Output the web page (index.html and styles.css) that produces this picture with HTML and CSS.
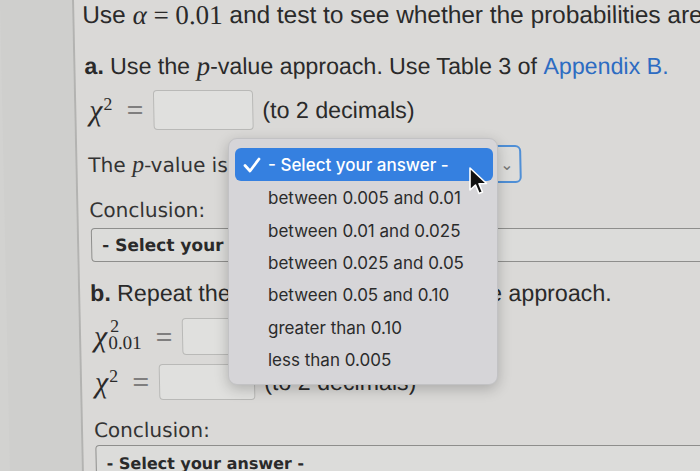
FILE: index.html
```html
<!DOCTYPE html>
<html lang="en">
<head>
  <meta charset="UTF-8">
  <title>Chi-square test</title>
  <link rel="stylesheet" href="styles.css">
</head>
<body>
  <div class="page">
    <div class="gutter"></div>
    <main class="panel">
      <p class="line intro">Use&nbsp;<i class="m">α</i>&nbsp;<span class="mu">=&nbsp;0.01</span>&nbsp;and test to see whether the probabilities are</p>
      <p class="line part-a"><b>a.</b>&nbsp;Use the&nbsp;<i class="m">p</i>-value approach. Use Table 3 of&nbsp;<a class="link">Appendix B.</a></p>
      <div class="line eq eq1">
        <span class="chi">χ<sup>2</sup></span>
        <span class="eqs">=</span>
        <span class="input"></span>
        <span class="note">(to 2 decimals)</span>
      </div>
      <div class="line pval">
        <span class="v">The&nbsp;<i class="m">p</i>-value is</span>
        <span class="select focus"><span class="caret">⌄</span></span>
      </div>
      <div class="line label v concl1">Conclusion:</div>
      <div class="select wide sel1">- Select your answer -</div>
      <p class="line part-b"><b>b.</b>&nbsp;Repeat the&nbsp;<span class="hidden">test using the critical valu</span>e approach.</p>
      <div class="line eq eq01">
        <span class="chi">χ<span class="scripts"><sup>2</sup><sub>0.01</sub></span></span>
        <span class="eqs">=</span>
        <span class="input"></span>
      </div>
      <div class="line eq eq2">
        <span class="chi">χ<sup>2</sup></span>
        <span class="eqs">=</span>
        <span class="input"></span>
        <span class="note">(to 2 decimals)</span>
      </div>
      <div class="line label v concl2">Conclusion:</div>
      <div class="select wide sel2">- Select your answer -</div>
    </main>
  </div>

  <div class="menu">
    <div class="opt active">
      <svg class="check" width="20" height="18" viewBox="0 0 20 18"><path d="M3 9.5 L8 15 L17 3" fill="none" stroke="#fff" stroke-width="2.8" stroke-linecap="round" stroke-linejoin="round"/></svg>
      <span>- Select your answer -</span>
    </div>
    <div class="opt">between 0.005 and 0.01</div>
    <div class="opt">between 0.01 and 0.025</div>
    <div class="opt">between 0.025 and 0.05</div>
    <div class="opt">between 0.05 and 0.10</div>
    <div class="opt">greater than 0.10</div>
    <div class="opt">less than 0.005</div>
  </div>

  <svg class="cursor" width="24" height="32" viewBox="0 0 24 32">
    <path d="M2 2 L2 24 L7.5 19 L11 27.5 L14.5 26 L11 17.8 L18.5 17.5 Z" fill="#111" stroke="#fff" stroke-width="1.6" stroke-linejoin="round"/>
  </svg>
</body>
</html>
```

FILE: styles.css
```css
body {
  margin: 0;
  width: 700px;
  height: 471px;
  overflow: hidden;
  position: relative;
  background: #d2d2d0;
  font-family: "Liberation Sans", Arial, sans-serif;
  color: #2a2a2a;
}

.page {
  display: flex;
  height: 471px;
  transform: skewX(1.2deg);
  transform-origin: 0 0;
}

.gutter {
  flex: none;
  width: 72px;
  background: #cfcfcd;
}

.panel {
  flex: 1;
  min-width: 0;
  border-left: 2px solid #b3b3b1;
  background: #dad9d7;
  padding-left: 8px;
  overflow: hidden;
}

.line {
  display: flex;
  align-items: center;
  margin: 0;
  white-space: nowrap;
  font-size: 23.2px;
}

.intro {
  font-size: 24.4px;
}

.m {
  font-family: "Liberation Serif", "Times New Roman", serif;
  font-style: italic;
  font-size: 27px;
}

.mu {
  font-family: "Liberation Serif", "Times New Roman", serif;
  font-size: 27px;
}

.link {
  color: #2d6cc2;
}

.v {
  font-family: "DejaVu Sans", Verdana, sans-serif;
  font-size: 20px;
  color: #333;
}

.v .m {
  font-size: 24px;
}

.select {
  box-sizing: border-box;
  background: #dcdcda;
  border: 1.5px solid #8e8e8c;
  border-radius: 4px;
  font-family: "DejaVu Sans", Verdana, sans-serif;
  font-weight: bold;
  font-size: 18px;
  color: #2a2a2a;
  display: flex;
  align-items: center;
  padding-left: 10px;
  white-space: nowrap;
}

.intro { height: 30px; }
.part-a { height: 30px; margin-top: 21px; padding-left: 1px; }
.eq1 { height: 40px; margin-top: 9px; }
.pval { height: 38px; margin-top: 15px; padding-left: 3px; }
.concl1 { height: 24px; margin-top: 15px; padding-left: 3px; }
.sel1 { height: 34px; margin-top: 6px; margin-left: 4px; font-size: 17px; }
.part-b { height: 26px; margin-top: 18px; padding-left: 2px; }
.eq01 { height: 37px; margin-top: 12px; }
.eq2 { height: 36px; margin-top: 9px; }
.concl2 { height: 24px; margin-top: 18px; padding-left: 3px; }
.sel2 { height: 36px; margin-top: 3px; margin-left: 4px; font-size: 16px; }

.hidden {
  display: inline-block;
  width: 252px;
  overflow: hidden;
  visibility: hidden;
}

.eq {
  padding-left: 5px;
}

.chi {
  font-family: "Liberation Serif", "Times New Roman", serif;
  font-style: italic;
  font-size: 30px;
  display: inline-flex;
  align-items: flex-start;
  line-height: 1;
}

.chi sup {
  font-style: normal;
  font-size: 18px;
  vertical-align: top;
  margin-left: 1px;
}

.scripts {
  display: inline-flex;
  flex-direction: column;
  font-style: normal;
  line-height: 1;
  margin-left: 1px;
}

.scripts sup {
  font-size: 18px;
  margin: -4px 0 0 2px;
}

.scripts sub {
  font-size: 19px;
  margin-top: -2px;
}

.eqs {
  font-family: "Liberation Serif", "Times New Roman", serif;
  font-size: 30px;
  color: #6a6a6a;
  margin: 0 10px 0 14px;
}

.input {
  display: block;
  width: 100px;
  height: 100%;
  box-sizing: border-box;
  background: #e0e0de;
  border: 1.5px solid #b9b9b7;
  border-radius: 4px;
}

.eq01 .input { width: 110px; }
.eq2 .input { width: 96px; }

.note {
  margin-left: 9px;
}

.select.focus {
  width: 292px;
  height: 38px;
  margin-left: 2px;
  border: 2px solid #4f8fd6;
  border-radius: 6px;
  justify-content: flex-end;
  padding-right: 6px;
}

.caret {
  font-weight: normal;
  color: #777;
  font-size: 16px;
}

.menu {
  position: absolute;
  left: 228px;
  top: 138px;
  width: 270px;
  height: 247px;
  box-sizing: border-box;
  padding: 9px 4px 0 6px;
  background: #d6d5d8;
  border: 1px solid #c2c2c4;
  border-radius: 9px;
  box-shadow: 0 4px 14px rgba(0, 0, 0, 0.22);
  font-family: Inter, "Open Sans", sans-serif;
  font-size: 17px;
  color: #2b2b2b;
}

.opt {
  height: 32.4px;
  display: flex;
  align-items: center;
  padding-left: 33px;
}

.opt.active {
  height: 33px;
  margin-bottom: 1px;
  padding-left: 7px;
  background: #3580e0;
  border-radius: 6px;
  color: #fff;
  font-weight: 500;
}

.check {
  margin-right: 6px;
}

.cursor {
  position: absolute;
  left: 468px;
  top: 166px;
}
```
